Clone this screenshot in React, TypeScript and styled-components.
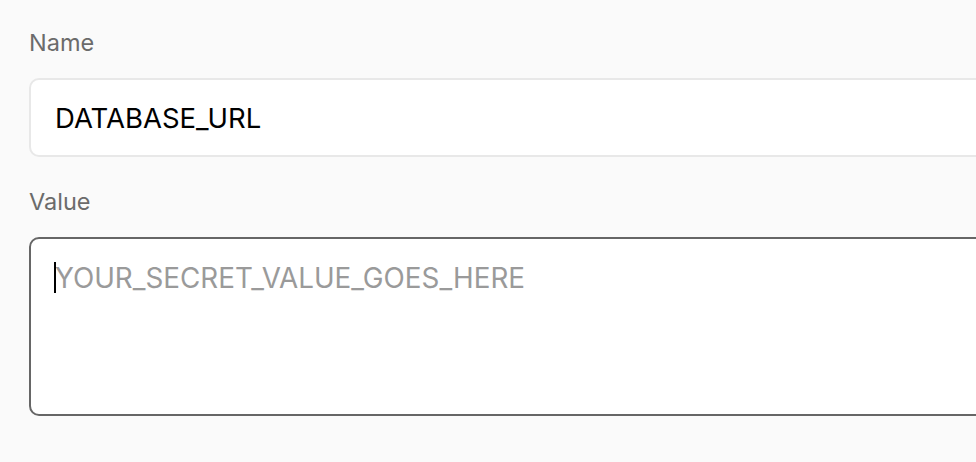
import styled, { createGlobalStyle } from 'styled-components';

const GlobalStyle = createGlobalStyle`
	html, body {
		margin: 0;
		padding: 0;
		background: #fafafa;
		overflow: hidden;
	}
	body {
		font-family: Inter, "Noto Sans", sans-serif;
	}
`;

const Form = styled.div`
	display: flex;
	flex-direction: column;
	width: 1100px;
	padding: 28px 0 0 29px;
`;

const Field = styled.div`
	display: flex;
	flex-direction: column;
	gap: 20px;
	margin-bottom: 30px;
`;

const Label = styled.label`
	font-size: 23.5px;
	line-height: 30px;
	color: #6b6b6b;
	font-weight: 400;
`;

const TextInput = styled.input`
	box-sizing: border-box;
	height: 79px;
	width: 100%;
	padding: 0 24px;
	border: 2px solid #e8e8e8;
	border-radius: 10px;
	background: #fff;
	font-family: Inter, "Noto Sans", sans-serif;
	font-size: 27.5px;
	color: #000;
	outline: none;
`;

const AreaWrap = styled.div`
	position: relative;
`;

const TextArea = styled.textarea`
	box-sizing: border-box;
	display: block;
	width: 100%;
	height: 179px;
	padding: 22px 24px;
	border: 2px solid #666;
	border-radius: 10px;
	background: #fff;
	font-family: Inter, "Noto Sans", sans-serif;
	font-size: 27.8px;
	line-height: 34px;
	color: #000;
	resize: none;
	outline: none;

	&::placeholder {
		color: #9a9a9a;
	}
`;

const Caret = styled.span`
	position: absolute;
	left: 25px;
	top: 25px;
	width: 2px;
	height: 31px;
	background: #000;
`;

export default function App() {
	return (
		<>
			<GlobalStyle />
			<Form>
				<Field>
					<Label>Name</Label>
					<TextInput defaultValue="DATABASE_URL" />
				</Field>
				<Field>
					<Label>Value</Label>
					<AreaWrap>
						<TextArea placeholder="YOUR_SECRET_VALUE_GOES_HERE" />
						<Caret />
					</AreaWrap>
				</Field>
			</Form>
		</>
	);
}
